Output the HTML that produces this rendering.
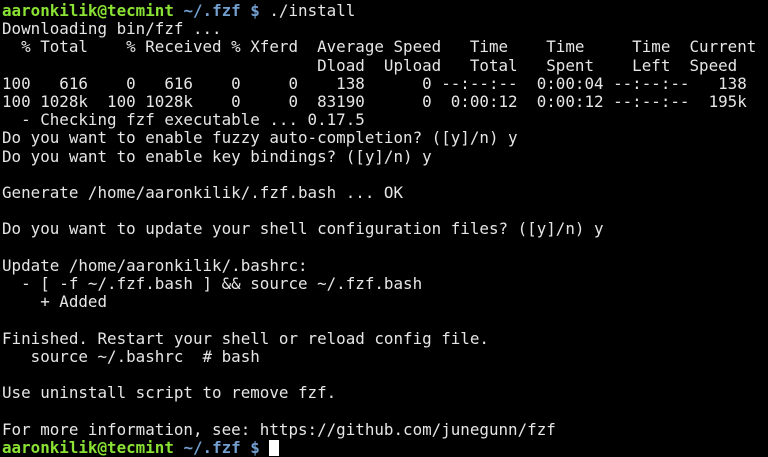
<!DOCTYPE html>
<html><head><meta charset="utf-8"><style>
html,body{margin:0;padding:0;background:#000;width:768px;height:457px;overflow:hidden}
pre{margin:0;position:absolute;left:2px;top:2px;font-family:"DejaVu Sans Mono","Liberation Mono",monospace;font-size:15.86px;line-height:18.2px;color:#e6e6e6;white-space:pre}
.g{color:#8ae234;font-weight:bold}.b{color:#729fcf;font-weight:bold}
.c{display:inline-block;width:10px;height:16px;background:#fff;vertical-align:-3px}
</style></head><body><pre><span class="g">aaronkilik@tecmint</span> <span class="b">~/.fzf $</span> ./install
Downloading bin/fzf ...
  % Total    % Received % Xferd  Average Speed   Time    Time     Time  Current
                                 Dload  Upload   Total   Spent    Left  Speed
100   616    0   616    0     0    138      0 --:--:--  0:00:04 --:--:--   138
100 1028k  100 1028k    0     0  83190      0  0:00:12  0:00:12 --:--:--  195k
  - Checking fzf executable ... 0.17.5
Do you want to enable fuzzy auto-completion? ([y]/n) y
Do you want to enable key bindings? ([y]/n) y

Generate /home/aaronkilik/.fzf.bash ... OK

Do you want to update your shell configuration files? ([y]/n) y

Update /home/aaronkilik/.bashrc:
  - [ -f ~/.fzf.bash ] &amp;&amp; source ~/.fzf.bash
    + Added

Finished. Restart your shell or reload config file.
   source ~/.bashrc  # bash

Use uninstall script to remove fzf.

For more information, see: https://github.com/junegunn/fzf
<span class="g">aaronkilik@tecmint</span> <span class="b">~/.fzf $</span> <span class="c"></span></pre></body></html>
